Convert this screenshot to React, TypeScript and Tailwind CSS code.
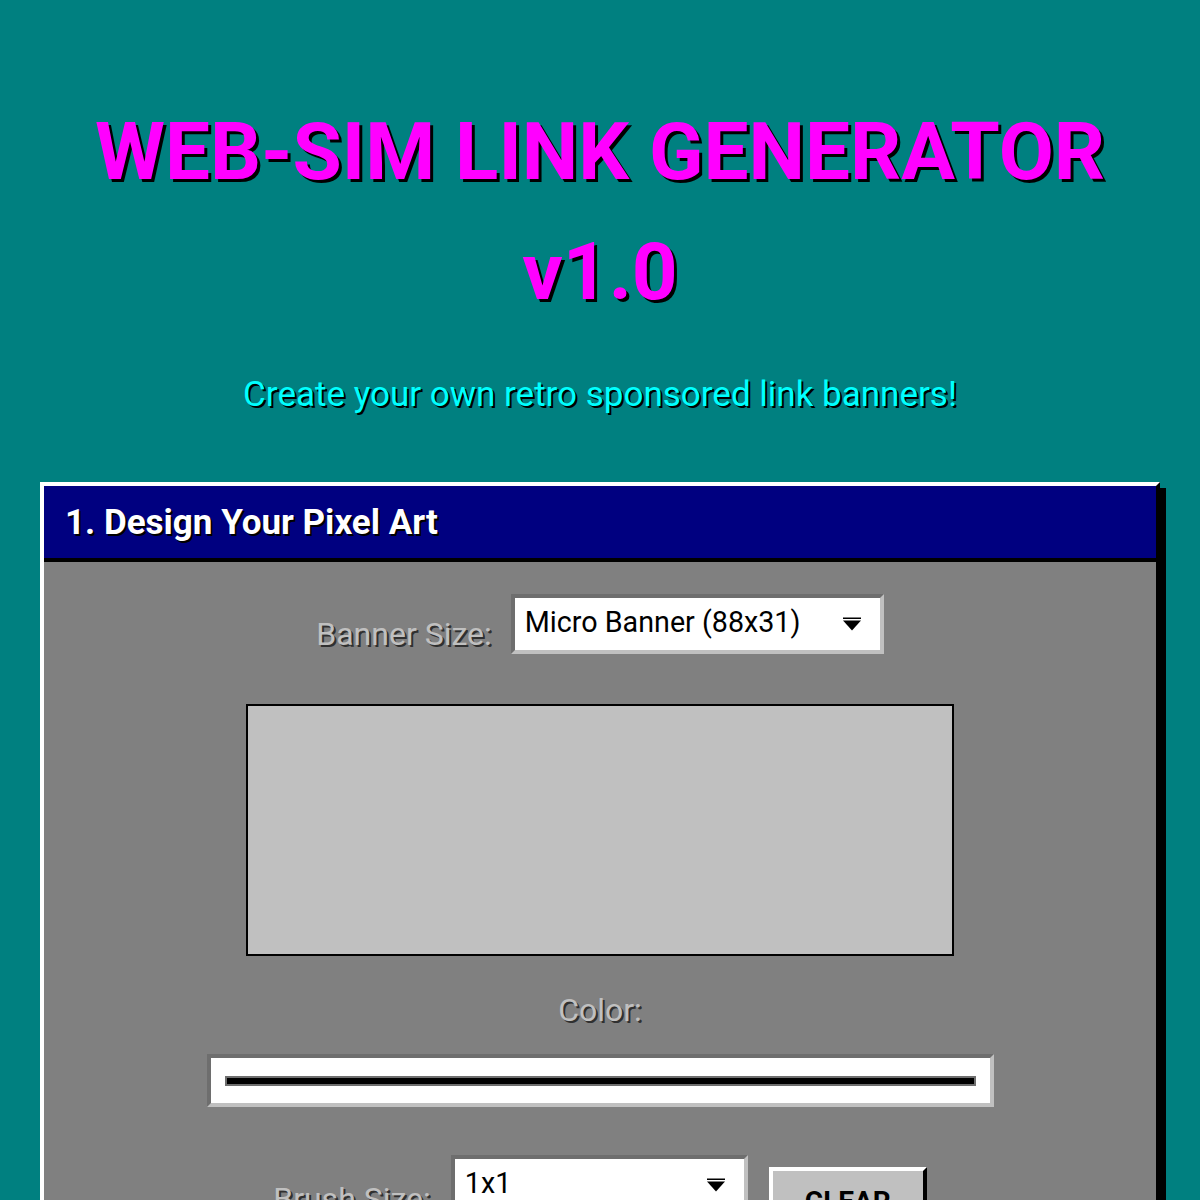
import React from "react";

function DropArrow() {
  return (
    <svg width="20" height="14" viewBox="0 0 20 14" className="shrink-0">
      <rect x="1" y="0.5" width="18" height="1.5" fill="#000" />
      <polygon points="1,3.5 19,3.5 10,13.5" fill="#000" />
    </svg>
  );
}

function RetroSelect({ value, width }: { value: string; width: string }) {
  return (
    <div
      className={`${width} h-[60px] bg-white border-4 border-t-[#6e6e6e] border-l-[#6e6e6e] border-r-[#c0c0c0] border-b-[#c0c0c0] flex items-center justify-between pl-[10px] pr-[18px]`}
    >
      <span className="text-[28.7px] leading-none text-black -mt-[3px]">{value}</span>
      <DropArrow />
    </div>
  );
}

const labelCls =
  "text-[32px] leading-[48px] text-[#c0c0c0] [text-shadow:2px_2px_0_#303030]";

export default function App() {
  return (
    <div className="min-h-screen bg-[#008080] font-[Roboto,sans-serif] px-10 pt-[92px] pb-10">
      <h1 className="text-center text-[80px] leading-[120px] font-bold text-[#ff00ff] [text-shadow:3px_3px_0_#000]">
        WEB-SIM LINK GENERATOR v1.0
      </h1>
      <p className="mt-[37px] text-center text-[35px] leading-[52px] text-[#00ffff] [text-shadow:2px_2px_0_#000]">
        Create your own retro sponsored link banners!
      </p>

      <section className="mt-[61px] border-4 border-t-white border-l-white border-r-black border-b-black shadow-[6px_6px_0_#000] bg-[#808080]">
        <header className="h-[76px] bg-[#000080] border-b-4 border-black flex items-center pl-[21px]">
          <h2 className="text-[35px] leading-none font-bold text-white [text-shadow:2px_2px_0_#000]">
            1. Design Your Pixel Art
          </h2>
        </header>

        <div className="flex flex-col items-center pt-8 pb-10">
          <div className="h-[60px] flex items-start gap-[19px]">
            <label className={`${labelCls} mt-[16px]`}>Banner Size:</label>
            <RetroSelect value="Micro Banner (88x31)" width="w-[373px]" />
          </div>

          <div className="mt-[50px] w-[708px] h-[252px] border-2 border-black bg-[#c0c0c0]" />

          <label className={`${labelCls} mt-[30px]`}>Color:</label>

          <div className="mt-[20px] w-[787px] h-[53px] bg-white border-4 border-t-[#6e6e6e] border-l-[#6e6e6e] border-r-[#c0c0c0] border-b-[#c0c0c0] flex items-center px-[14px]">
            <div className="w-full h-[10px] bg-black border-2 border-[#6e6e6e]" />
          </div>

          <div className="mt-[48px] h-[60px] flex items-start gap-[20px]">
            <label className={`${labelCls} mt-[20px]`}>Brush Size:</label>
            <RetroSelect value="1x1" width="w-[297px]" />
            <button className="mt-[12px] ml-px w-[158px] h-[60px] bg-[#c0c0c0] border-4 border-t-white border-l-white border-r-black border-b-black text-[28px] font-bold text-black leading-none pt-[17px] flex justify-center items-start">
              CLEAR
            </button>
          </div>
        </div>
      </section>
    </div>
  );
}
